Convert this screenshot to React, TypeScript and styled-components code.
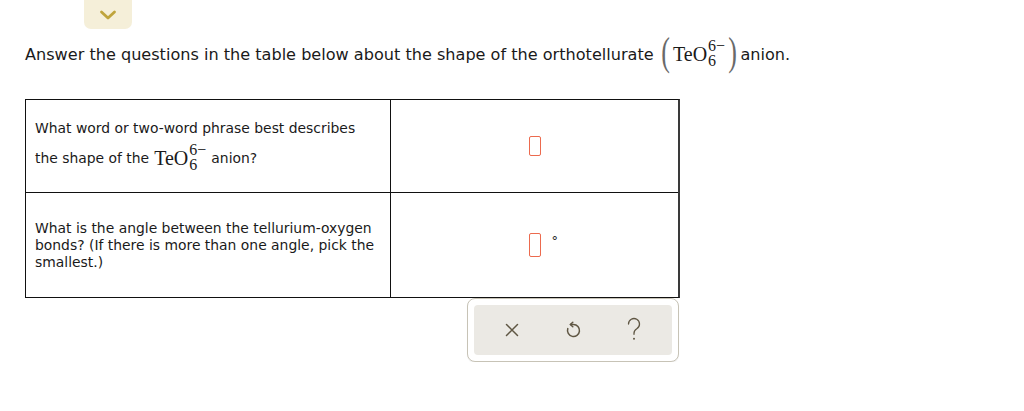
import styled, { createGlobalStyle } from 'styled-components';

const GlobalStyle = createGlobalStyle`
  body {
    margin: 0;
    background: #fff;
    font-family: "DejaVu Sans", Verdana, sans-serif;
    color: #1a1a1a;
  }
`;

function Formula({ size = 18 }: { size?: number }) {
  return (
    <StyledFormula size={size}>
      <span>TeO</span>
      <StyledScripts size={size}>
        <span>6−</span>
        <span>6</span>
      </StyledScripts>
    </StyledFormula>
  );
}

function App() {
  return (
    <>
      <GlobalStyle />
      <StyledPage>
        <StyledTab>
          <svg width="20" height="14" viewBox="0 0 20 14">
            <path d="M3.5 4 L10 10 L16.5 4" fill="none" stroke="#bfa43c" strokeWidth="2.8" strokeLinecap="round" strokeLinejoin="round" />
          </svg>
        </StyledTab>

        <StyledPrompt>
          <span>Answer the questions in the table below about the shape of the orthotellurate</span>
          <StyledParenGroup>
            <StyledParen>(</StyledParen>
            <Formula size={20} />
            <StyledParen>)</StyledParen>
          </StyledParenGroup>
          <span>anion.</span>
        </StyledPrompt>

        <StyledTable>
          <StyledRow height={92}>
            <StyledQuestion>
              <p>What word or two-word phrase best describes</p>
              <StyledLine>
                <span>the shape of the</span>
                <Formula size={20} />
                <span>anion?</span>
              </StyledLine>
            </StyledQuestion>
            <StyledAnswer>
              <StyledInputBox height={20} />
            </StyledAnswer>
          </StyledRow>
          <StyledRow height={104} last>
            <StyledQuestion>
              <p>
                What is the angle between the tellurium-oxygen bonds? (If there is more than one angle, pick the
                smallest.)
              </p>
            </StyledQuestion>
            <StyledAnswer>
              <StyledInputBox height={24} />
              <StyledDegree>°</StyledDegree>
            </StyledAnswer>
          </StyledRow>
        </StyledTable>

        <StyledToolbar>
          <StyledToolbarInner>
            <StyledToolButton aria-label="clear">
              <svg width="16" height="16" viewBox="0 0 16 16">
                <path d="M2.5 2.5 L13.5 13.5 M13.5 2.5 L2.5 13.5" stroke="#5f5643" strokeWidth="1.5" strokeLinecap="round" />
              </svg>
            </StyledToolButton>
            <StyledToolButton aria-label="undo">
              <svg width="18" height="20" viewBox="0 0 18 20">
                <path d="M6.5 4.5 H9.5 A6 6 0 1 1 3.8 8.6" fill="none" stroke="#5f5643" strokeWidth="1.5" strokeLinecap="round" />
                <path d="M8.8 2.2 L6.3 4.5 L8.8 6.8" fill="none" stroke="#5f5643" strokeWidth="1.5" strokeLinecap="round" strokeLinejoin="round" />
              </svg>
            </StyledToolButton>
            <StyledToolButton aria-label="help">
              <svg width="18" height="26" viewBox="0 0 18 26">
                <path d="M3.5 7 A5.5 5.5 0 1 1 11.8 11.8 C9.7 13 9 14.1 9 16.3 V17.3" fill="none" stroke="#5f5643" strokeWidth="1.3" strokeLinecap="round" />
                <circle cx="9" cy="21.8" r="1" fill="#5f5643" />
              </svg>
            </StyledToolButton>
          </StyledToolbarInner>
        </StyledToolbar>
      </StyledPage>
    </>
  );
}

const StyledPage = styled.div`
  padding-left: 25px;
  width: 654px;
`;

const StyledTab = styled.div`
  margin-left: 59px;
  width: 48px;
  height: 29px;
  background: #f5efd9;
  border-radius: 0 0 7px 7px;
  display: flex;
  align-items: center;
  justify-content: center;
`;

const StyledPrompt = styled.div`
  margin-top: 7px;
  display: flex;
  align-items: center;
  white-space: nowrap;
  font-size: 16.1px;
  height: 36px;
`;

const StyledParenGroup = styled.span`
  display: inline-flex;
  align-items: center;
  margin: 0 1px 0 5px;
`;

const StyledParen = styled.span`
  font-family: "Liberation Serif", serif;
  font-size: 40px;
  color: #6a6a6a;
  transform: scaleX(0.65);
  line-height: 1;
  position: relative;
  top: -2px;
`;

const StyledFormula = styled.span<{ size: number }>`
  display: inline-flex;
  align-items: center;
  font-family: "Liberation Serif", "Times New Roman", serif;
  font-size: ${({ size }) => size}px;
  color: #1a1a1a;
  margin: 0 1px;
`;

const StyledScripts = styled.span<{ size: number }>`
  display: inline-flex;
  flex-direction: column;
  font-size: ${({ size }) => Math.round(size * 0.82)}px;
  line-height: 0.95;
  margin-left: 1px;
  margin-top: -2px;
`;

const StyledTable = styled.div`
  margin-top: 27px;
  border: 1px solid #111;
  border-right: 2px solid #3a3a3a;
  width: 652px;
`;

const StyledRow = styled.div<{ height: number; last?: boolean }>`
  display: grid;
  grid-template-columns: 365px 1fr;
  height: ${({ height }) => height}px;
  border-bottom: ${({ last }) => (last ? 'none' : '1px solid #111')};
`;

const StyledQuestion = styled.div`
  border-right: 1px solid #111;
  padding: 0 9px;
  font-size: 13.9px;
  line-height: 17px;
  display: flex;
  flex-direction: column;
  justify-content: center;

  p {
    margin: 0;
  }
`;

const StyledLine = styled.div`
  display: flex;
  align-items: center;
  gap: 4px;
  margin-top: 7px;
  white-space: pre;
`;

const StyledAnswer = styled.div`
  display: flex;
  align-items: center;
  justify-content: center;
  position: relative;
`;

const StyledInputBox = styled.div<{ height: number }>`
  width: 10px;
  height: ${({ height }) => height - 2}px;
  border: 1.5px solid #ec6a4e;
  border-radius: 2px;
`;

const StyledDegree = styled.span`
  font-size: 13px;
  position: absolute;
  left: calc(50% + 17px);
  top: 40px;
`;

const StyledToolbar = styled.div`
  margin-left: 442px;
  width: 212px;
  height: 64px;
  box-sizing: border-box;
  border: 1px solid #c7c3b6;
  border-radius: 8px;
  padding: 6px;
  background: #fff;
  box-shadow: 0 1px 1px rgba(0, 0, 0, 0.06);
`;

const StyledToolbarInner = styled.div`
  height: 100%;
  background: #ebe9e4;
  border-radius: 4px;
  display: grid;
  grid-template-columns: repeat(3, 1fr);
  align-items: center;
  justify-items: center;
  padding: 0 8px;
`;

const StyledToolButton = styled.button`
  border: none;
  background: none;
  padding: 0;
  display: flex;
  align-items: center;
  justify-content: center;
  cursor: pointer;
`;

export default App;
